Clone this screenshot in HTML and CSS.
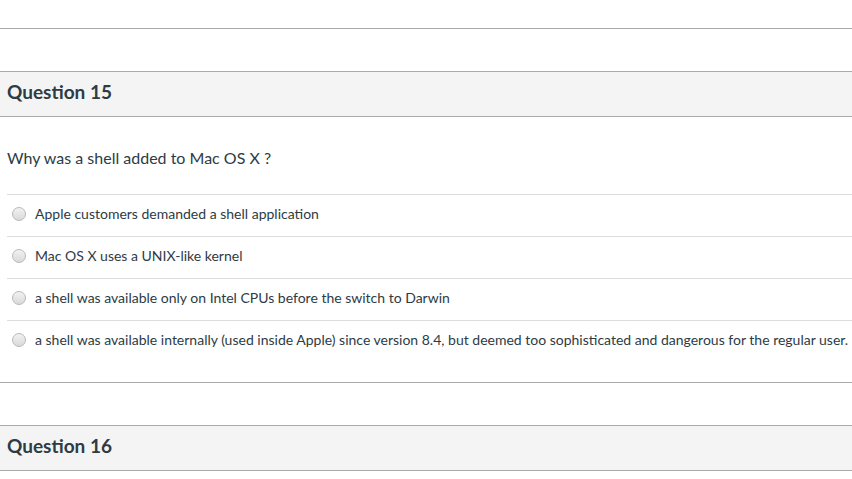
FILE: index.html
```html
<!DOCTYPE html>
<html lang="en">
<head>
    <meta charset="UTF-8">
    <meta name="viewport" content="width=device-width, initial-scale=1.0">
    <title>Quiz</title>
    <link rel="stylesheet" href="styles.css">
</head>
<body>
    <div class="prev-question"></div>

    <div class="question">
        <div class="question-header">
            <h2>Question 15</h2>
        </div>
        <div class="question-text">Why was a shell added to Mac OS X ?</div>
        <div class="answers">
            <label class="answer"><span class="radio"></span>Apple customers demanded a shell application</label>
            <label class="answer"><span class="radio"></span>Mac OS X uses a UNIX-like kernel</label>
            <label class="answer"><span class="radio"></span>a shell was available only on Intel CPUs before the switch to Darwin</label>
            <label class="answer"><span class="radio"></span>a shell was available internally (used inside Apple) since version 8.4, but deemed too sophisticated and dangerous for the regular user.</label>
        </div>
    </div>

    <div class="question">
        <div class="question-header">
            <h2>Question 16</h2>
        </div>
    </div>
</body>
</html>
```

FILE: styles.css
```css
body {
    font-family: 'Lato', 'Open Sans', sans-serif;
    margin: 0;
    padding: 0;
    background-color: #fff;
    color: #2d3b45;
    overflow: hidden;
}

.prev-question {
    height: 28px;
    border-bottom: 1px solid #aaa;
}

.question {
    margin-top: 42px;
    border-top: 1px solid #aaa;
    border-bottom: 1px solid #aaa;
}

.question-header {
    background-color: #f4f4f4;
    height: 44px;
    box-sizing: border-box;
    display: flex;
    align-items: center;
    padding: 0 0 5px 7px;
}

/* header followed by the question body gets its own divider */
.question .question-header:not(:last-child) {
    border-bottom: 1px solid #aaa;
    height: 45px;
}

.question-header h2 {
    margin: 0;
    font-size: 19px;
    font-weight: 700;
}

.question-text {
    font-size: 16px;
    line-height: 24px;
    padding: 29px 7px 24px;
}

.answers {
    margin-left: 7px;
    padding-bottom: 20px;
}

.answer {
    display: flex;
    align-items: center;
    height: 37px;
    padding-bottom: 4px;
    border-top: 1px solid #ddd;
    font-size: 14px;
    white-space: nowrap;
}

.radio {
    width: 12px;
    height: 12px;
    border: 1px solid #b9b9b9;
    border-radius: 50%;
    background: linear-gradient(#f2f2f2, #d9d9d9);
    margin: 0 9px 0 5px;
    flex-shrink: 0;
}
```
